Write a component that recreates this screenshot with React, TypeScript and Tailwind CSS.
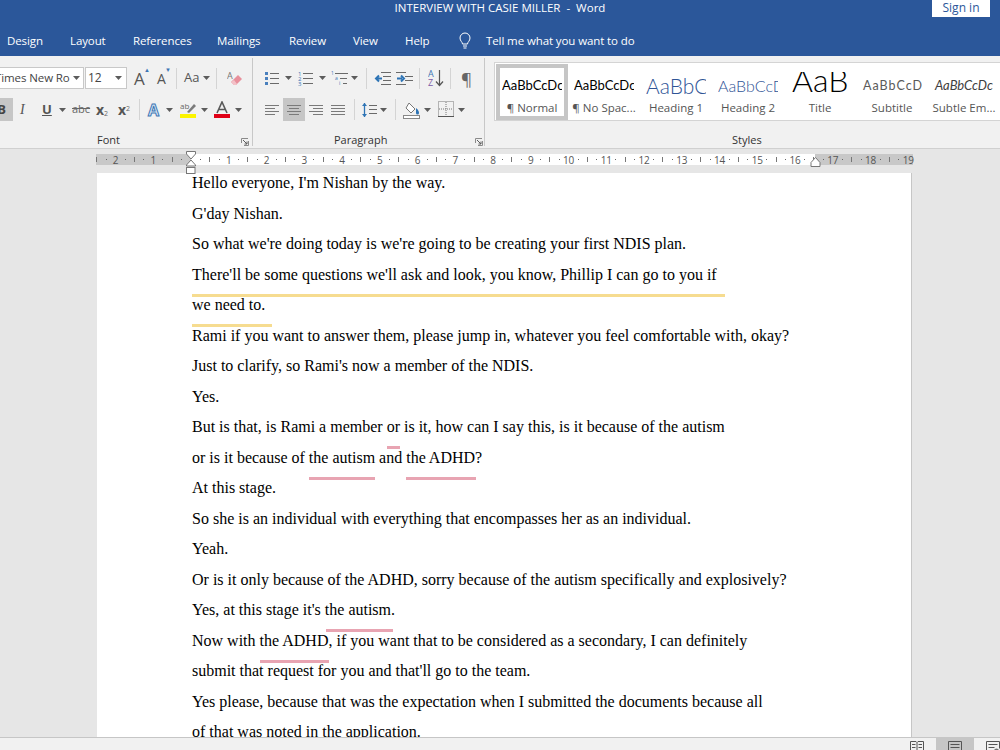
import React from "react";

const ui = { fontFamily: '"Open Sans", "Noto Sans", sans-serif' };

const tabs = [
  { label: "Design", cls: "w-[36px] ml-[7px]" },
  { label: "Layout", cls: "w-[36px] ml-[27px]" },
  { label: "References", cls: "w-[57px] ml-[27px]" },
  { label: "Mailings", cls: "w-[45px] ml-[27px]" },
  { label: "Review", cls: "w-[39px] ml-[27px]" },
  { label: "View", cls: "w-[26px] ml-[25px]" },
  { label: "Help", cls: "w-[25px] ml-[26px]" },
];

const styles = [
  { preview: "AaBbCcDc", label: "¶ Normal", cls: "text-[13px] text-black" },
  { preview: "AaBbCcDc", label: "¶ No Spac...", cls: "text-[13px] text-black" },
  { preview: "AaBbCc", label: "Heading 1", cls: "text-[21px] font-light text-[#2f5496]" },
  { preview: "AaBbCcD", label: "Heading 2", cls: "text-[16px] font-light text-[#2f5496]" },
  { preview: "AaB", label: "Title", cls: "ml-[2px] -translate-y-[6px] text-[32px] font-light text-black" },
  { preview: "AaBbCcD", label: "Subtitle", cls: "ml-[1px] text-[12.5px] tracking-[1px] text-[#5a5a5a]" },
  { preview: "AaBbCcDc", label: "Subtle Em...", cls: "ml-[1px] text-[13px] italic text-[#404040]" },
];

const lines: React.ReactNode[] = [
  "Hello everyone, I'm Nishan by the way.",
  "G'day Nishan.",
  "So what we're doing today is we're going to be creating your first NDIS plan.",
  <>There'll be some questions we'll ask and look, you know, Phillip I can go to you if<Mark color="bg-[#f6dc90]" cls="left-0 w-[533px]" /></>,
  <>we need to.<Mark color="bg-[#f6dc90]" cls="left-0 w-[80px]" /></>,
  "Rami if you want to answer them, please jump in, whatever you feel comfortable with, okay?",
  "Just to clarify, so Rami's now a member of the NDIS.",
  "Yes.",
  <>But is that, is Rami a member <span className="relative">or<Mark color="bg-[#e8a4b2]" cls="left-0 w-[13px]" /></span> is it, how can I say this, is it because of the autism</>,
  <>or is it because of <span className="relative">the autism<Mark color="bg-[#e8a4b2]" cls="left-0 w-[66px]" /></span> and <span className="relative">the ADHD<Mark color="bg-[#e8a4b2]" cls="left-0 w-[70px]" /></span>?</>,
  "At this stage.",
  "So she is an individual with everything that encompasses her as an individual.",
  "Yeah.",
  "Or is it only because of the ADHD, sorry because of the autism specifically and explosively?",
  <>Yes, at this stage it's <span className="relative">the autism.<Mark color="bg-[#e8a4b2]" cls="left-[1px] w-[67px]" /></span></>,
  <>Now with <span className="relative">the ADHD,<Mark color="bg-[#e8a4b2]" cls="left-0 w-[69px]" /></span> if you want that to be considered as a secondary, I can definitely</>,
  "submit that request for you and that'll go to the team.",
  "Yes please, because that was the expectation when I submitted the documents because all",
  "of that was noted in the application.",
];

function Mark({ color, cls }: { color: string; cls: string }) {
  return <span className={`absolute top-[28px] h-[3px] ${color} ${cls}`} />;
}

function Caret({ cls = "" }: { cls?: string }) {
  return (
    <svg width="7" height="4" viewBox="0 0 7 4" className={`shrink-0 ${cls}`}>
      <path d="M0 0h7L3.5 4z" fill="#5c5c5c" />
    </svg>
  );
}

function Sep({ cls = "" }: { cls?: string }) {
  return <div className={`w-px h-[21px] bg-[#d4d4d4] shrink-0 ${cls}`} />;
}

function Launcher({ cls = "" }: { cls?: string }) {
  return (
    <svg width="8" height="8" viewBox="0 0 8 8" className={cls}>
      <path d="M.5 5V.5H7M7.5 3v4.5H3" fill="none" stroke="#8a8a8a" />
      <path d="M2 2l4 4M6 3.5V6H3.5" fill="none" stroke="#5c5c5c" />
    </svg>
  );
}

function Lines({ rows, dots, w = 14, x = 0 }: { rows: number[]; dots?: boolean; w?: number; x?: number }) {
  return (
    <>
      {rows.map((y, i) => (
        <path key={i} d={`M${x} ${y + 0.5}h${w}`} stroke="#6a6a6a" fill="none" />
      ))}
      {dots && rows.map((y, i) => <rect key={i} x={x - 5} y={y - 1} width="3" height="3" fill="#4a80bd" />)}
    </>
  );
}

function Align({ kind }: { kind: "left" | "center" | "right" | "justify" }) {
  const short = { left: "M1 6.5h10M1 12.5h10", center: "M3 6.5h10M3 12.5h10", right: "M5 6.5h10M5 12.5h10", justify: "M1 6.5h14M1 12.5h14" }[kind];
  return (
    <svg width="16" height="16" viewBox="0 0 16 16" className="block">
      <path d="M1 3.5h14M1 9.5h14" stroke="#7a7a7a" />
      <path d={short} stroke="#7a7a7a" />
    </svg>
  );
}

function Ruler() {
  const cells = Array.from({ length: 87 }, (_, i) => i - 10);
  return (
    <div className="h-[24px] shrink-0 bg-[#e6e6e6] pt-[5px]">
      <div className="relative ml-[96px] w-[817px] h-[11px] flex bg-[linear-gradient(90deg,#c8c8c8_95px,#ffffff_95px,#ffffff_719px,#c8c8c8_719px)]">
        <div className="flex -ml-[4px]">
          {cells.map((i) => {
            const cm = Math.abs(i) / 4;
            return (
              <div key={i} className="w-[9.4375px] shrink-0 flex items-center justify-center text-[10px] leading-none text-[#555]">
                {i === 0 ? null : i % 4 === 0 ? <span className="whitespace-nowrap">{cm}</span> : i % 2 === 0 ? <span className="w-px h-[5px] bg-[#777]" /> : <span className="w-px h-px bg-[#666]" />}
              </div>
            );
          })}
        </div>
        {/* indent markers */}
        <svg width="12" height="24" viewBox="0 0 12 24" className="absolute left-[89px] top-[-3px]">
          <path d="M1.5.5h9V3L6 8 1.5 3zM6 9l4.5 5v1h-9v-1z" fill="#fff" stroke="#777" />
          <rect x="1.5" y="16.5" width="8.5" height="6" fill="#fff" stroke="#777" />
        </svg>
        <svg width="11" height="10" viewBox="0 0 11 10" className="absolute left-[714px] top-[3px]">
          <path d="M5.5.5l4.5 5v4H1v-4z" fill="#fff" stroke="#777" />
        </svg>
      </div>
    </div>
  );
}

function FontGroup() {
  return (
    <div className="relative w-[253px] shrink-0 border-r border-[#c8c8c8] h-[88px] mt-[2px] overflow-hidden">
      <div className="flex items-center h-[24px] mt-[8px]">
        <div className="w-[84px] h-[22px] shrink-0 bg-white border border-[#c8c8c8] border-l-0 flex items-center overflow-hidden">
          <span className="ml-[-5px] whitespace-nowrap text-[11.5px] tracking-[-0.1px] text-[#444]">Times New Ro</span>
          <Caret cls="ml-auto mr-[3px]" />
        </div>
        <div className="w-[42px] h-[22px] ml-[1px] shrink-0 bg-white border border-[#c8c8c8] flex items-center pl-[2px] text-[12px] text-[#444]">
          12<Caret cls="ml-auto mr-[4px]" />
        </div>
        <span className="ml-[7px] w-[15px] text-[17px] leading-none text-[#555] relative">A<span className="absolute left-[10px] top-[-3px] text-[6px] text-[#3d76b5]">▲</span></span>
        <span className="ml-[8px] w-[14px] text-[14px] leading-none text-[#555] relative pt-[2px]">A<span className="absolute left-[8px] top-[-3px] text-[6px] text-[#3d76b5]">▼</span></span>
        <Sep cls="ml-[5px]" />
        <span className="ml-[7px] text-[13px] text-[#555]">Aa</span>
        <Caret cls="ml-[4px]" />
        <Sep cls="ml-[6px]" />
        <svg width="17" height="17" viewBox="0 0 17 17" className="ml-[10px]">
          <text x="0" y="9" fontSize="9" fill="#777" style={ui}>A</text>
          <path d="M7 15l-3-3 7-7 4 4-6 6z" fill="#e8909c" />
          <path d="M4 12l3 3h2l1-1-3-4z" fill="#f3c1c8" />
        </svg>
      </div>
      <div className="flex items-center h-[23px] mt-[8px]">
        <div className="w-[13px] h-[23px] shrink-0 bg-[#c6c6c6] flex items-center justify-end overflow-hidden">
          <span className="pr-[7px] font-bold text-[13px] text-[#444]">B</span>
        </div>
        <span className="ml-[7px] w-[10px] text-[14px] italic text-[#555]" style={{ fontFamily: '"Liberation Serif", serif' }}>I</span>
        <span className="ml-[12px] w-[11px] text-[13px] font-bold underline text-[#555]">U</span>
        <Caret cls="ml-[6px]" />
        <span className="ml-[6px] w-[17px] text-[11px] text-[#666] line-through">abc</span>
        <span className="ml-[7px] w-[14px] text-[14px] font-bold leading-none text-[#555]">x<sub className="text-[7px] font-normal text-[#666]">2</sub></span>
        <span className="ml-[8px] w-[14px] text-[14px] font-bold leading-none text-[#555]">x<sup className="text-[7px] font-normal text-[#666]">2</sup></span>
        <Sep cls="ml-[7px]" />
        <span className="ml-[8px] w-[15px] text-[16px] leading-none text-[#dbe8f6] font-bold [-webkit-text-stroke:1px_#3f78b5]">A</span>
        <Caret cls="ml-[3px]" />
        <svg width="17" height="18" viewBox="0 0 17 18" className="ml-[7px]">
          <text x="0" y="8" fontSize="8" fill="#666" style={ui}>ab</text>
          <path d="M7 11l7-8 2 2-7 7z" fill="#7b7b7b" />
          <rect y="13" width="16" height="4" fill="#fcf400" />
        </svg>
        <Caret cls="ml-[4px]" />
        <svg width="17" height="18" viewBox="0 0 17 18" className="ml-[6px]">
          <path d="M3 12L8 1l5 11M5 8.500h6" fill="none" stroke="#5a5a5a" strokeWidth="1.6" />
          <rect y="13" width="16" height="4" fill="#e00016" />
        </svg>
        <Caret cls="ml-[4px]" />
      </div>
      <span className="absolute left-[97px] top-[76px] text-[11px] leading-none text-[#333]">Font</span>
      <Launcher cls="absolute left-[241px] top-[80px]" />
    </div>
  );
}

function ParagraphGroup() {
  return (
    <div className="relative w-[232px] shrink-0 border-r border-[#c8c8c8] h-[88px] mt-[2px]">
      <div className="flex items-center h-[24px] mt-[8px] pl-[12px]">
        <svg width="16" height="16" viewBox="0 0 16 16"><Lines rows={[3, 8, 13]} dots w={9} x={5} /></svg>
        <Caret cls="ml-[4px]" />
        <svg width="16" height="16" viewBox="0 0 16 16" className="ml-[6px]">
          <text x="0" y="6" fontSize="6" fill="#3d76b5" style={ui}>1</text>
          <text x="0" y="11" fontSize="6" fill="#3d76b5" style={ui}>2</text>
          <text x="0" y="16" fontSize="6" fill="#3d76b5" style={ui}>3</text>
          <Lines rows={[3, 8, 13]} w={10} x={5} />
        </svg>
        <Caret cls="ml-[5px]" />
        <svg width="17" height="16" viewBox="0 0 17 16" className="ml-[5px]">
          <text x="0" y="5" fontSize="5" fill="#3d76b5" style={ui}>1</text>
          <text x="4" y="10" fontSize="5" fill="#3d76b5" style={ui}>a</text>
          <text x="8" y="15" fontSize="5" fill="#3d76b5" style={ui}>i</text>
          <path d="M4 3.500h13M9 8.500h7M12 13.500h4" stroke="#6a6a6a" />
        </svg>
        <Caret cls="ml-[3px]" />
        <Sep cls="ml-[8px]" />
        <svg width="17" height="16" viewBox="0 0 17 16" className="ml-[7px]">
          <path d="M7 2.500h10M9 6.500h8M9 10.500h8M7 14.500h10" stroke="#6a6a6a" />
          <path d="M8 8.500H3M5 5.500L2 8.500l3 3" fill="none" stroke="#2e74b5" strokeWidth="2" />
        </svg>
        <svg width="17" height="16" viewBox="0 0 17 16" className="ml-[5px]">
          <path d="M0 2.500h10M0 14.500h10M9 6.500h8M9 10.500h8" stroke="#6a6a6a" />
          <path d="M1 8.500h5M5 5.500l3 3-3 3" fill="none" stroke="#2e74b5" strokeWidth="2" />
        </svg>
        <Sep cls="ml-[6px]" />
        <svg width="16" height="18" viewBox="0 0 16 18" className="ml-[8px]">
          <text x="0" y="8" fontSize="9" fill="#3d76b5" style={ui}>A</text>
          <text x="0" y="17" fontSize="9" fill="#7c5aa6" style={ui}>Z</text>
          <path d="M11.500 1v15M8 12.500l3.500 4 3.500-4" fill="none" stroke="#555" strokeWidth="1.2" />
        </svg>
        <Sep cls="ml-[6px]" />
        <span className="ml-[10px] text-[17px] leading-none text-[#666]">¶</span>
      </div>
      <div className="flex items-center h-[23px] mt-[8px] pl-[11px]">
        <Align kind="left" />
        <div className="ml-[3px] w-[22px] h-[23px] bg-[#c6c6c6] flex items-center justify-center"><Align kind="center" /></div>
        <span className="ml-[3px]"><Align kind="right" /></span>
        <span className="ml-[6px]"><Align kind="justify" /></span>
        <Sep cls="ml-[8px]" />
        <svg width="16" height="18" viewBox="0 0 16 18" className="ml-[6px]">
          <path d="M3.500 2v14" stroke="#2e74b5" strokeWidth="1.3" />
          <path d="M1 5l2.500-3L6 5zM1 13l2.500 3L6 13z" fill="#2e74b5" />
          <path d="M8 4.500h8M8 8.500h8M8 12.500h8" stroke="#6a6a6a" />
        </svg>
        <Caret cls="ml-[3px]" />
        <Sep cls="ml-[8px]" />
        <svg width="18" height="18" viewBox="0 0 18 18" className="ml-[7px]">
          <path d="M6 2l6 6-4 4-5-5z" fill="#fff" stroke="#777" />
          <path d="M13 7c2 2 3 3 3 5a1.500 1.500 0 01-3 0z" fill="#2e74b5" />
          <rect x=".5" y="14.500" width="16" height="3" fill="#fff" stroke="#888" />
        </svg>
        <Caret cls="ml-[3px]" />
        <svg width="17" height="17" viewBox="0 0 17 17" className="ml-[7px]">
          <rect x=".5" y=".5" width="15" height="15" fill="none" stroke="#777" strokeDasharray="1 1" />
          <path d="M8 1v14M1 8h14" stroke="#777" strokeDasharray="1 1" />
          <path d="M0 15.500h16" stroke="#555" />
        </svg>
        <Caret cls="ml-[3px]" />
      </div>
      <span className="absolute left-[81px] top-[76px] text-[11px] leading-none text-[#333]">Paragraph</span>
      <Launcher cls="absolute left-[222px] top-[80px]" />
    </div>
  );
}

function StylesGroup() {
  return (
    <div className="relative flex-1 min-w-0 h-[92px] overflow-hidden">
      <div className="ml-[9px] mt-[6px] h-[59px] bg-white border-y border-l border-[#d4d4d4] flex items-stretch pl-[1px] pt-[1px]">
        {styles.map((s, i) => (
          <div key={i} className={`w-[72px] h-[56px] shrink-0 flex flex-col items-center overflow-hidden pt-[4px] ${i === 0 ? "border-[4px] border-[#c6c6c6]" : "border-[4px] border-transparent"}`}>
            <div className="w-[60px] h-[28px] shrink-0 overflow-hidden flex items-center justify-start">
              <span className={`whitespace-nowrap ${s.cls}`} style={{ fontFamily: 'Lato, "Open Sans", sans-serif' }}>{s.preview}</span>
            </div>
            <span className="whitespace-nowrap text-[11.5px] leading-[16px] text-[#555]">{s.label}</span>
          </div>
        ))}
      </div>
      <span className="absolute left-[247px] top-[78px] text-[11px] leading-none text-[#333]">Styles</span>
    </div>
  );
}

export default function App() {
  return (
    <div className="w-[1000px] h-[750px] overflow-hidden flex flex-col bg-[#e6e6e6]" style={ui}>
      {/* title bar + tabs */}
      <div className="h-[56px] shrink-0 bg-[#2b579a] text-white">
        <div className="h-[29px] grid grid-cols-[1fr_auto_1fr] items-start">
          <div />
          <div className="text-[11.5px] leading-[16px] whitespace-pre">INTERVIEW WITH CASIE MILLER  -  Word</div>
          <div className="flex justify-end pr-[10px]">
            <div className="w-[58px] h-[17px] bg-white text-[#2b579a] text-[12px] leading-[16px] text-center">Sign in</div>
          </div>
        </div>
        <div className="flex items-center h-[24px] text-[11.5px] tracking-[-0.1px]">
          {tabs.map((t) => (
            <span key={t.label} className={`${t.cls} shrink-0 whitespace-nowrap`}>{t.label}</span>
          ))}
          <svg width="16" height="18" viewBox="0 0 16 18" className="ml-[27px]">
            <path d="M5.500 12c0-2-2.500-3-2.500-6a5 5 0 0110 0c0 3-2.500 4-2.500 6z" fill="none" stroke="#fff" />
            <path d="M6 14h4M6.500 16h3" stroke="#fff" />
          </svg>
          <span className="ml-[13px] whitespace-nowrap">Tell me what you want to do</span>
        </div>
      </div>

      {/* ribbon */}
      <div className="h-[93px] shrink-0 bg-[#f1f1f1] border-b border-[#d0d0d0] flex">
        <FontGroup />
        <ParagraphGroup />
        <StylesGroup />
      </div>

      <Ruler />

      {/* document */}
      <div className="flex-1 min-h-0 overflow-hidden bg-[#e6e6e6]">
        <div className="ml-[97px] w-[815px] h-full bg-white border-r border-[#c6c6c6] overflow-hidden">
          <div className="mt-[-5px] pl-[95px] text-[16px] leading-[30px] text-black" style={{ fontFamily: '"Liberation Serif", serif' }}>
            {lines.map((l, i) => (
              <div key={i} className="whitespace-nowrap odd:h-[31px] even:h-[30px]"><span className="relative">{l}</span></div>
            ))}
          </div>
        </div>
      </div>

      {/* status bar */}
      <div className="h-[13px] shrink-0 bg-[#f1f1f1] border-t border-[#c6c6c6] flex items-start overflow-hidden">
        <svg width="14" height="12" viewBox="0 0 14 12" className="ml-[910px] mt-[3px]">
          <path d="M.5.5h5.500l1 1 1-1h5.500v11H.5zM7 1.500v10M2 3.500h3.500M2 6.500h3.500M8.500 3.500H12M8.500 6.500H12" fill="none" stroke="#555" />
        </svg>
        <div className="ml-[12px] w-[38px] h-[12px] bg-[#c6c6c6] flex justify-center pt-[3px]">
          <svg width="14" height="12" viewBox="0 0 14 12">
            <path d="M.5.5h13v11H.5zM2.500 3.500h9M2.500 6.500h9M2.500 9.500h9" fill="none" stroke="#555" />
          </svg>
        </div>
        <svg width="14" height="12" viewBox="0 0 14 12" className="ml-[12px] mt-[3px]">
          <path d="M.5 11.500V.5h13v7M2.500 3.500h9M2.500 6.500h6" fill="none" stroke="#555" />
          <circle cx="10.500" cy="10" r="2.500" fill="#777" />
        </svg>
      </div>
    </div>
  );
}
